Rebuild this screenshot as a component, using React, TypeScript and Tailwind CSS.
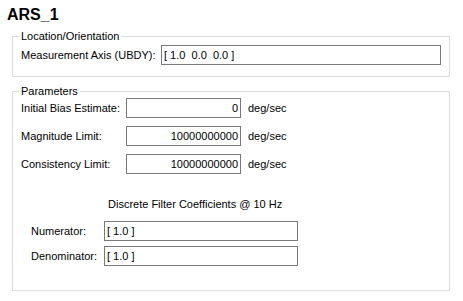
import React from "react";

const font = { fontFamily: '"Liberation Sans", Arial, sans-serif' };

function Field({ value, className }: { value: string; className: string }) {
  return (
    <div
      className={`h-[20px] border border-[#7a7a7a] bg-white text-[11px] leading-[18px] whitespace-pre text-black ${className}`}
    >
      {value}
    </div>
  );
}

export default function App() {
  return (
    <div className="w-[463px] h-[301px] bg-white text-black text-[11px] overflow-hidden" style={font}>
      <div className="pt-[6px] pl-[7px] text-[16px] leading-[18px] font-bold">ARS_1</div>

      <fieldset className="mt-[6px] ml-[12px] w-[438px] border border-[#dcdcdc] pb-[11px]">
        <legend className="ml-[6px] px-[2px] text-[11px] leading-[13px]">Location/Orientation</legend>
        <div className="flex items-center pl-[8px] pt-[2px]">
          <div className="w-[140px] leading-[13px]">Measurement Axis (UBDY):</div>
          <Field value="[ 1.0  0.0  0.0 ]" className="w-[280px] pl-[2px]" />
        </div>
      </fieldset>

      <fieldset className="mt-[8px] ml-[12px] w-[438px] border border-[#dcdcdc] pb-[24px]">
        <legend className="ml-[6px] px-[2px] text-[11px] leading-[13px]">Parameters</legend>
        <div className="flex flex-col gap-[8px] pl-[8px]">
          {[
            ["Initial Bias Estimate:", "0"],
            ["Magnitude Limit:", "10000000000"],
            ["Consistency Limit:", "10000000000"],
          ].map(([label, val]) => (
            <div key={label} className="flex items-center">
              <div className="w-[105px] leading-[13px]">{label}</div>
              <Field value={val} className="w-[115px] text-right pr-[2px]" />
              <div className="ml-[7px] leading-[13px]">deg/sec</div>
            </div>
          ))}
        </div>
        <div className="mt-[24px] pl-[95px] leading-[13px]">Discrete Filter Coefficients @ 10 Hz</div>
        <div className="mt-[10px] flex flex-col gap-[5px] pl-[18px]">
          {["Numerator:", "Denominator:"].map((label) => (
            <div key={label} className="flex items-center">
              <div className="w-[73px] leading-[13px]">{label}</div>
              <Field value="[ 1.0 ]" className="w-[194px] pl-[2px]" />
            </div>
          ))}
        </div>
      </fieldset>
    </div>
  );
}
